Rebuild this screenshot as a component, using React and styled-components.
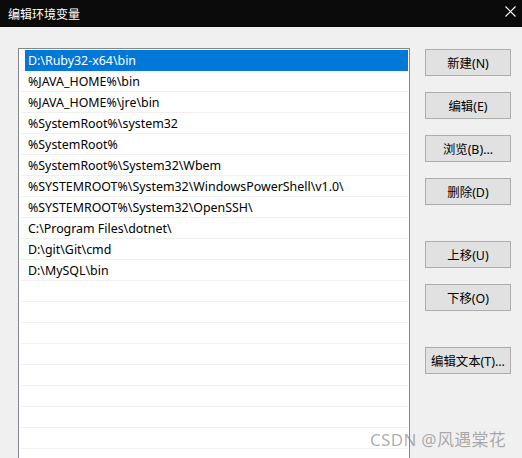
import React from "react";
import styled, { createGlobalStyle } from "styled-components";

const Global = createGlobalStyle`
  html, body { margin: 0; padding: 0; background: #f0f0f0; overflow: hidden; }
  body { font-family: "Noto Sans", "Noto Sans CJK SC", sans-serif; font-size: 12px; }
`;

const Window = styled.div`
  width: 522px;
  height: 458px;
  display: flex;
  flex-direction: column;
  position: relative;
  overflow: hidden;
  background: #f0f0f0;
`;

const TitleBar = styled.div`
  height: 27px;
  flex: none;
  background: #0b0b0b;
  display: flex;
  align-items: center;
  justify-content: space-between;
  padding: 0 6px 0 8px;
  box-sizing: border-box;
`;

const Title = styled.div`
  color: #ffffff;
  font-family: "Noto Sans CJK SC", sans-serif;
  font-size: 12px;
  line-height: 27px;
  margin-top: -1px;
`;

const CloseBtn = styled.div`
  width: 11px;
  height: 11px;
  display: flex;
  margin-top: -5px;
`;

const Body = styled.div`
  flex: 1;
  display: flex;
  padding: 21px 0 0 18px;
  gap: 15px;
  min-height: 0;
`;

const ListBox = styled.div`
  width: 392px;
  height: 430px;
  flex: none;
  box-sizing: border-box;
  border: 1px solid #828790;
  background: #ffffff;
  padding: 1px 1px 0 1px;
  display: flex;
  flex-direction: column;
`;

const Row = styled.div`
  height: 21px;
  flex: none;
  box-sizing: border-box;
  margin-left: 1px;
  border-bottom: 1px solid #f0f0f0;
  display: flex;
`;

const RowContent = styled.div`
  flex: 1;
  margin-left: 4px;
  margin-bottom: ${(p) => (p.$selected ? "-1px" : "0")};
  background: ${(p) => (p.$selected ? "#0078d7" : "transparent")};
  color: ${(p) => (p.$selected ? "#ffffff" : "#000000")};
  padding-left: 3px;
  font-size: 12.4px;
  line-height: 21px;
  white-space: nowrap;
`;

const ButtonColumn = styled.div`
  display: flex;
  flex-direction: column;
  gap: 36px;
  padding-top: 1px;
`;

const ButtonGroup = styled.div`
  display: flex;
  flex-direction: column;
  gap: 16px;
`;

const Button = styled.div`
  width: 86px;
  height: 27px;
  box-sizing: border-box;
  border: 1px solid #adadad;
  background: #e1e1e1;
  color: #000;
  display: flex;
  align-items: center;
  justify-content: center;
  font-family: "Noto Sans", "Noto Sans CJK SC", sans-serif;
  font-size: 12.4px;
`;

const Watermark = styled.div`
  position: absolute;
  left: 370px;
  top: 428px;
  font-family: "Noto Sans", "Noto Sans CJK SC", sans-serif;
  font-size: 17px;
  line-height: 24px;
  letter-spacing: 0.3px;
  color: rgba(120, 120, 120, 0.6);
  white-space: nowrap;
`;

const items = [
  "D:\\Ruby32-x64\\bin",
  "%JAVA_HOME%\\bin",
  "%JAVA_HOME%\\jre\\bin",
  "%SystemRoot%\\system32",
  "%SystemRoot%",
  "%SystemRoot%\\System32\\Wbem",
  "%SYSTEMROOT%\\System32\\WindowsPowerShell\\v1.0\\",
  "%SYSTEMROOT%\\System32\\OpenSSH\\",
  "C:\\Program Files\\dotnet\\",
  "D:\\git\\Git\\cmd",
  "D:\\MySQL\\bin",
];

const rows = [...items, ...Array(9).fill("")];

const groups = [
  ["新建(N)", "编辑(E)", "浏览(B)...", "删除(D)"],
  ["上移(U)", "下移(O)"],
  ["编辑文本(T)..."],
];

export default function App() {
  return (
    <>
      <Global />
      <Window>
        <TitleBar>
          <Title>编辑环境变量</Title>
          <CloseBtn>
            <svg width="11" height="11" viewBox="0 0 11 11">
              <path d="M0.5 0.5 L10.5 10.5 M10.5 0.5 L0.5 10.5" stroke="#ffffff" strokeWidth="1.1" fill="none" />
            </svg>
          </CloseBtn>
        </TitleBar>
        <Body>
          <ListBox>
            {rows.map((t, i) => (
              <Row key={i}>
                <RowContent $selected={i === 0}>{t}</RowContent>
              </Row>
            ))}
          </ListBox>
          <ButtonColumn>
            {groups.map((g, gi) => (
              <ButtonGroup key={gi}>
                {g.map((b) => (
                  <Button key={b}>{b}</Button>
                ))}
              </ButtonGroup>
            ))}
          </ButtonColumn>
        </Body>
        <Watermark>CSDN @风遇棠花</Watermark>
      </Window>
    </>
  );
}
